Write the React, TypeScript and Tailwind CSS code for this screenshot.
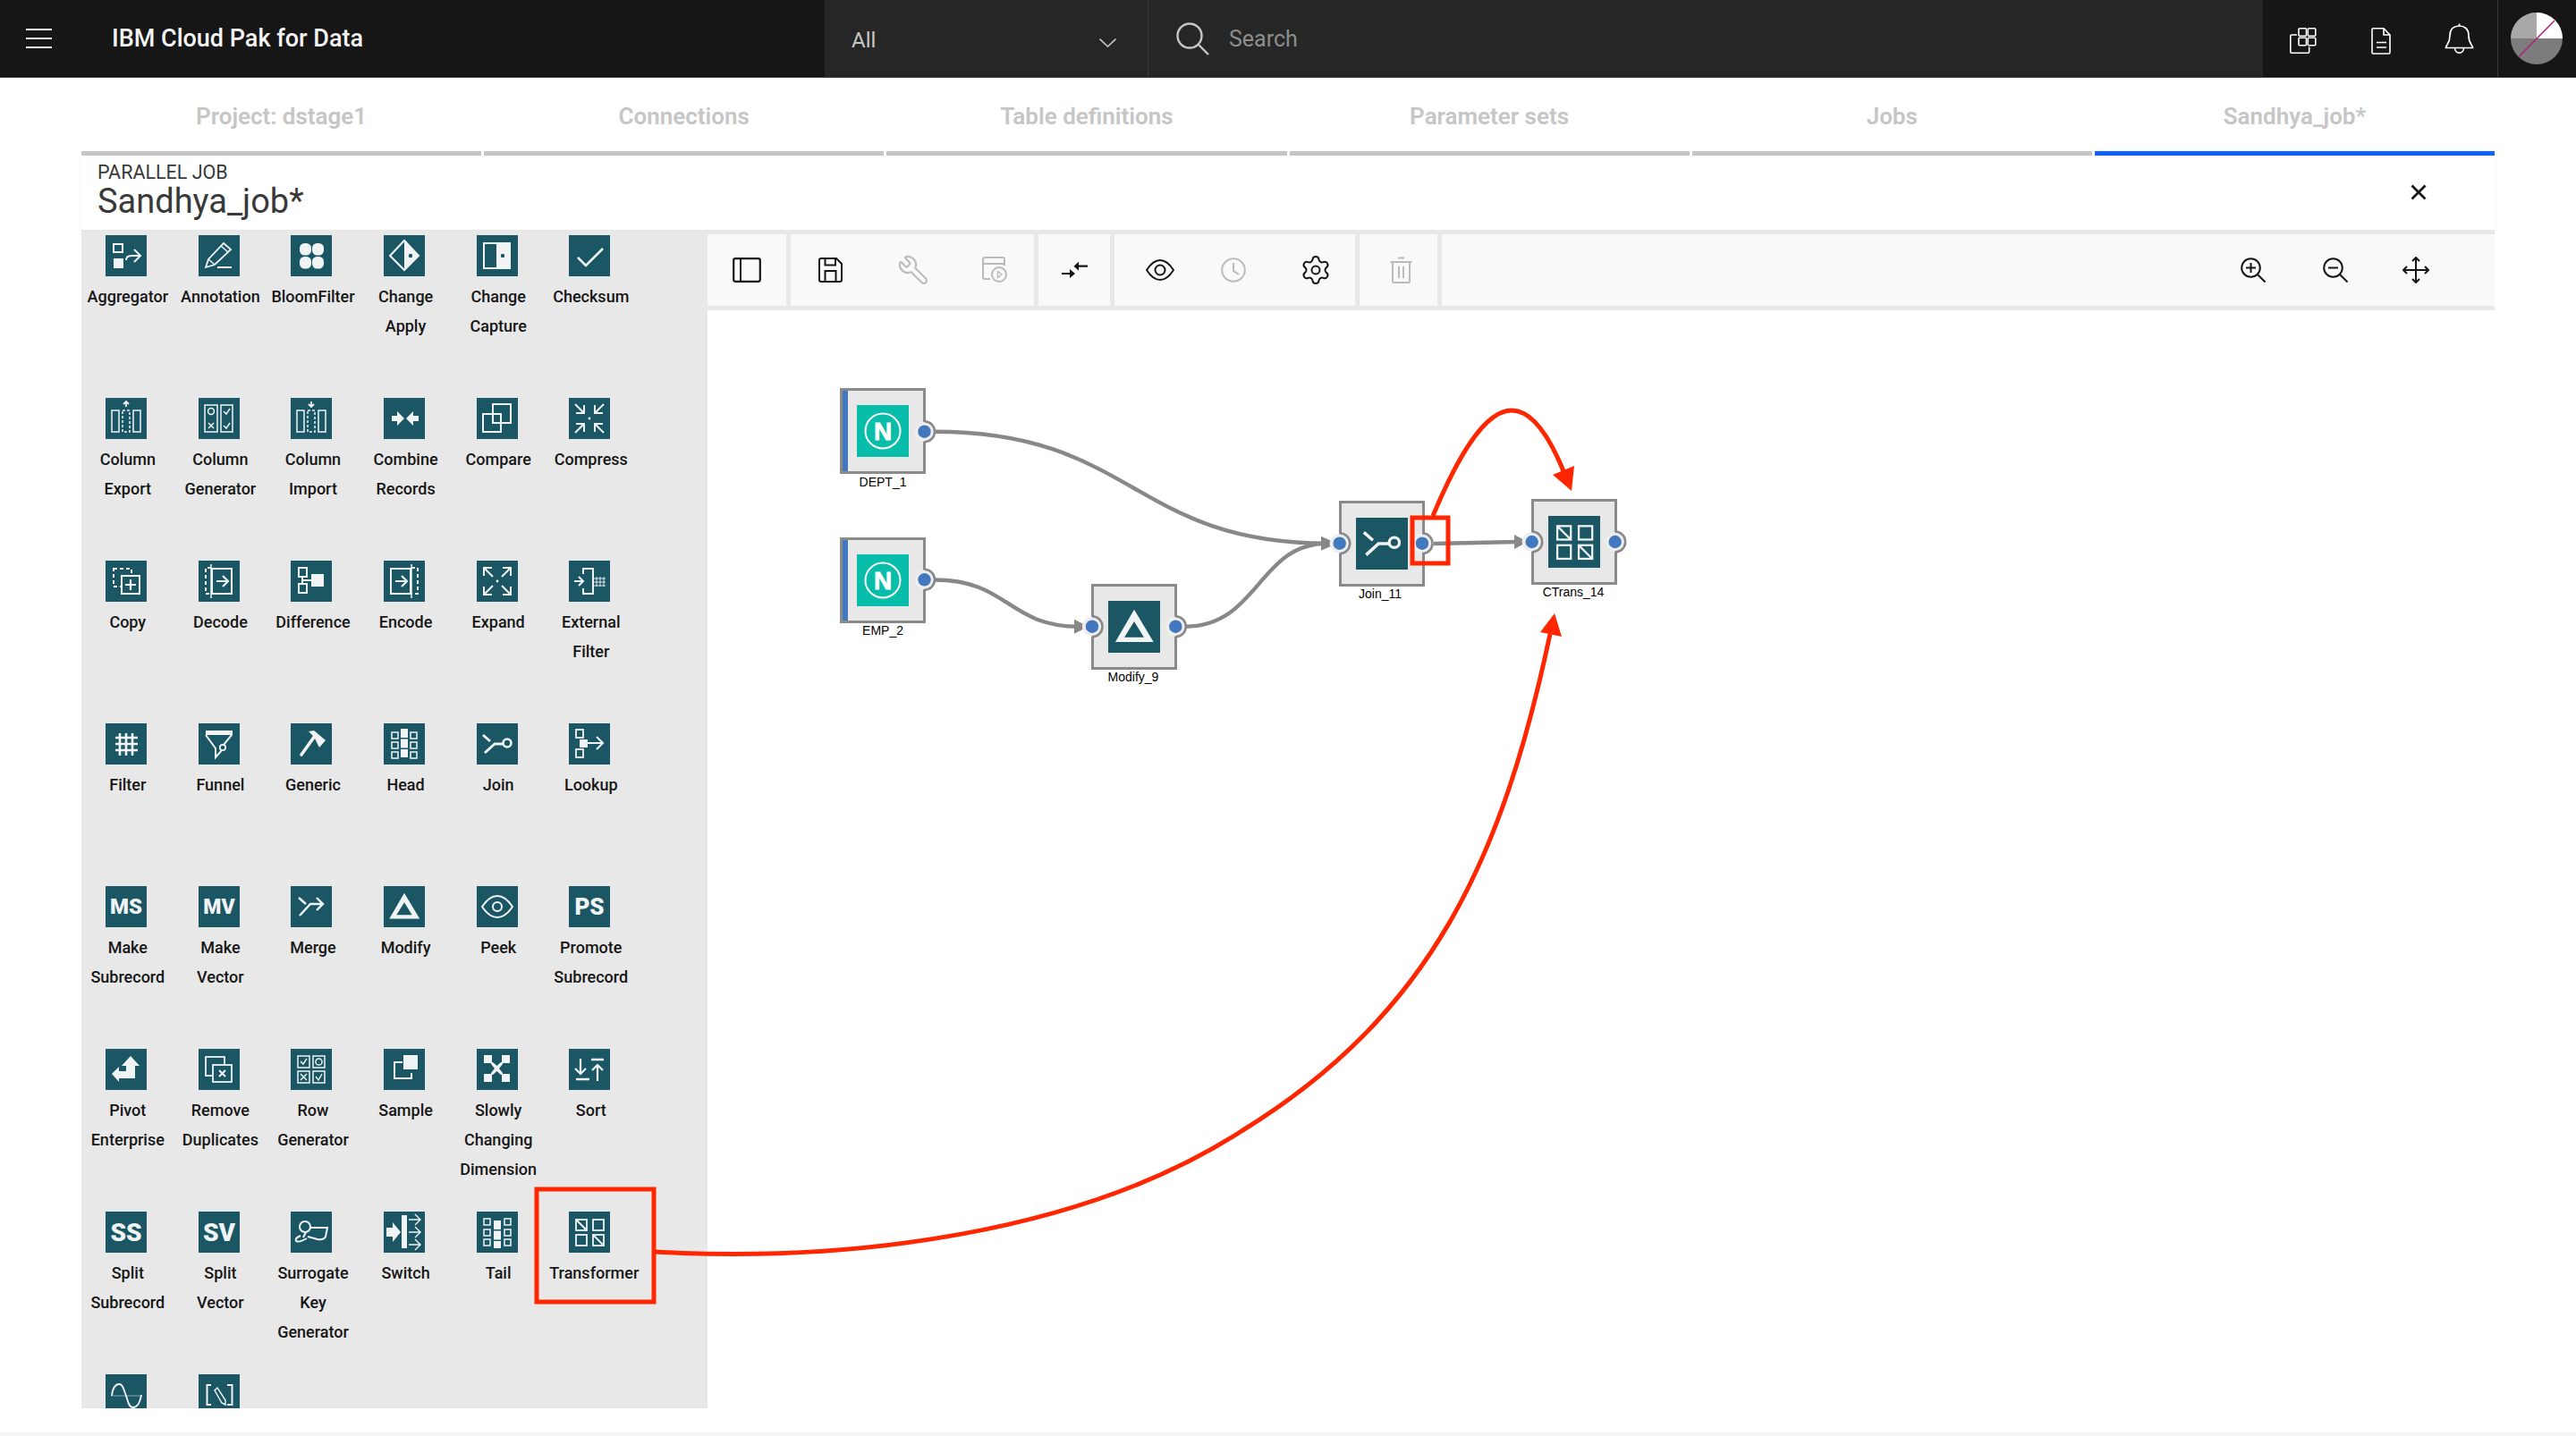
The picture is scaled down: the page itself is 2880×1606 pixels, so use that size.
import React from "react";
import { Settings, Wrench } from "lucide-react";

const W = "#f1f4f5";
const F = { fill: W, stroke: "none" } as const;

const Letters = ({ t, s, y }: { t: string; s: number; y: number }) => (
  <text x="23" y={y} textAnchor="middle" fontFamily="Roboto, sans-serif" fontWeight={900} fontSize={s} fill={W} stroke="none">{t}</text>
);

const corners = (out: boolean) => {
  const a = out
    ? ["M18 18 L8 8", "M8 17 V8 H17", "M28 18 L38 8", "M29 8 H38 V17", "M18 28 L8 38", "M8 29 V38 H17", "M28 28 L38 38", "M29 38 H38 V29"]
    : ["M7 7 L17 17", "M8 17 H17 V8", "M39 7 L29 17", "M38 17 H29 V8", "M7 39 L17 29", "M8 29 H17 V38", "M39 39 L29 29", "M38 29 H29 V38"];
  return (
    <>
      {a.map((d) => <path key={d} d={d} strokeWidth={2} />)}
      <circle cx="23" cy="23" r="1.4" {...F} />
    </>
  );
};

const columns = (
  <>
    <rect x="7" y="14" width="8" height="24" />
    <rect x="19" y="14" width="8" height="24" strokeDasharray="3 2" />
    <rect x="31" y="14" width="8" height="24" />
  </>
);

const ICONS: Record<string, React.ReactNode> = {
  Aggregator: (
    <>
      <rect x="9" y="10" width="10" height="9" strokeWidth={2} />
      <rect x="9" y="26" width="11" height="11" {...F} />
      <path d="M23 28 Q23 23 29 23 H38" strokeWidth={2} />
      <path d="M32 16 L39 23 L32 30" strokeWidth={2} />
    </>
  ),
  Annotation: (
    <>
      <path d="M8 36 L11 27 L28 9 L36 16 L18 33 Z" strokeWidth={1.8} />
      <path d="M25 12 L33 19 M11 27 L18 33" />
      <path d="M21 36 H37" strokeWidth={2} />
    </>
  ),
  BloomFilter: (
    <>
      <rect x="10" y="9" width="13" height="13.5" rx="5.5" {...F} />
      <rect x="24" y="9" width="13" height="13.5" rx="5.5" {...F} />
      <rect x="10" y="24" width="13" height="13.5" rx="5.5" {...F} />
      <rect x="24" y="24" width="13" height="13.5" rx="5.5" {...F} />
    </>
  ),
  Change_Apply: (
    <>
      <path d="M23 6 L39 23 L23 39 L7 23 Z" strokeWidth={2} />
      <path d="M23 6 L39 23 L23 39 Z" {...F} />
      <circle cx="30" cy="23" r="2.2" fill="#1b5665" stroke="none" />
    </>
  ),
  Change_Capture: (
    <>
      <rect x="8" y="9" width="29" height="28" strokeWidth={2} />
      <rect x="22" y="9" width="15" height="28" {...F} />
      <circle cx="29" cy="23" r="2.2" fill="#1b5665" stroke="none" />
    </>
  ),
  Checksum: <path d="M10 25 L19 34 L38 15" strokeWidth={2.6} />,
  Column_Export: (
    <>
      {columns}
      <path d="M23 10 V4 M20 7 L23 4 L26 7" strokeWidth={1.8} />
    </>
  ),
  Column_Generator: (
    <>
      <rect x="7" y="8" width="14" height="30" />
      <rect x="25" y="8" width="13" height="30" />
      <circle cx="14" cy="15" r="3.4" />
      <path d="M11 28 L17 34 M17 28 L11 34 M28 15 L31 18 L35 12 M28 31 L31 34 L35 28" />
    </>
  ),
  Column_Import: (
    <>
      {columns}
      <path d="M23 4 V10 M20 7 L23 10 L26 7" strokeWidth={1.8} />
    </>
  ),
  Combine_Records: (
    <>
      <path d="M9 20 H15 V15 L23 23 L15 31 V26 H9 Z" {...F} />
      <path d="M39 20 H33 V15 L25 23 L33 31 V26 H39 Z" {...F} />
    </>
  ),
  Compare: (
    <>
      <rect x="18" y="7" width="20" height="21" strokeWidth={2} />
      <rect x="7" y="18" width="20" height="20" strokeWidth={2} />
    </>
  ),
  Compress: corners(false),
  Copy: (
    <>
      <rect x="9" y="9" width="20" height="20" strokeDasharray="4 3" strokeWidth={2} />
      <rect x="18" y="17" width="20" height="20" fill="#1b5665" strokeWidth={2} />
      <path d="M28 21 V33 M22 27 H34" strokeWidth={2.2} />
    </>
  ),
  Decode: (
    <>
      <path d="M14 8 H8 V37 H14" strokeDasharray="4 3" strokeWidth={2} />
      <rect x="15" y="9" width="22" height="28" strokeWidth={2} />
      <path d="M14 4 V42" />
      <path d="M20 23 H32 M27 17 L33 23 L27 29" strokeWidth={2.2} />
    </>
  ),
  Difference: (
    <>
      <rect x="9" y="8" width="9" height="10" strokeWidth={2} />
      <rect x="9" y="26" width="9" height="10" strokeWidth={2} />
      <path d="M13 18 V26 M13 22 H23" strokeWidth={2} />
      <rect x="23" y="15" width="14" height="14" {...F} />
    </>
  ),
  Encode: (
    <>
      <rect x="8" y="9" width="22" height="28" strokeWidth={2} />
      <path d="M31 8 H38 V37 H31" strokeDasharray="4 3" strokeWidth={2} />
      <path d="M31 4 V42" />
      <path d="M13 23 H25 M20 17 L26 23 L20 29" strokeWidth={2.2} />
    </>
  ),
  Expand: corners(true),
  External_Filter: (
    <>
      <path d="M6 23 H15 M11 18 L16 23 L11 28" strokeWidth={2} />
      <path d="M16 15 V9 H27 V37 H16 V31" strokeWidth={2} />
      <path d="M31 18 V29 M35 18 V29 M39 18 V29 M28 20 H41 M28 24 H41 M28 28 H41" strokeWidth={0.9} />
    </>
  ),
  Filter: <path d="M16 11 V36 M23 11 V36 M30 11 V36 M11 16 H36 M11 23 H36 M11 30 H36" strokeWidth={2.6} />,
  Funnel: (
    <>
      <path d="M8 9 H37 V13 L28 24 M8 13 L19 28 V38 L26 30" strokeWidth={2} />
      <path d="M8 9 H37 V13 H8 Z" {...F} />
      <circle cx="27" cy="27" r="3.2" strokeWidth={1.8} />
    </>
  ),
  Generic: (
    <>
      <path d="M12 35 L27 14" strokeWidth={3.6} strokeLinecap="round" />
      <path d="M20 9 L26 8 L39 19 L32 27 L26 15 Z" {...F} />
    </>
  ),
  Head: (
    <>
      {[10, 21, 32].map((y) => (
        <React.Fragment key={y}>
          <rect x="9" y={y} width="7" height="7" />
          <rect x="30" y={y} width="7" height="7" />
        </React.Fragment>
      ))}
      <rect x="19" y="6" width="8" height="10" {...F} />
      <rect x="19" y="17.5" width="8" height="10" {...F} />
      <rect x="19" y="29" width="8" height="9" {...F} />
    </>
  ),
  Join: (
    <>
      <path d="M7 13 L15 20" strokeWidth={2.8} />
      <path d="M9 33 L20 23 H29" strokeWidth={2.8} />
      <circle cx="34" cy="22" r="4.5" strokeWidth={2.6} />
    </>
  ),
  Lookup: (
    <>
      <rect x="8" y="7" width="8" height="9" strokeWidth={1.8} />
      <rect x="8" y="29" width="8" height="9" strokeWidth={1.8} />
      <rect x="12" y="18" width="9" height="9" {...F} />
      <path d="M21 22 H37 M31 15 L38 22 L31 29" strokeWidth={2} />
    </>
  ),
  Make_Subrecord: <Letters t="MS" s={24} y={31} />,
  Make_Vector: <Letters t="MV" s={23} y={31} />,
  Merge: (
    <>
      <path d="M9 13 L17 20" strokeWidth={2.4} />
      <path d="M10 33 L22 20 H36 M29 13 L36 20 L29 27" strokeWidth={2.4} />
    </>
  ),
  Modify: <path fillRule="evenodd" d="M23 7.7 L40.2 36.5 H6.3 Z M23 18.2 L14.3 32.3 H31.7 Z" {...F} />,
  Peek: (
    <>
      <path d="M6 23 Q14 11 23 11 Q32 11 40 23 Q32 35 23 35 Q14 35 6 23 Z" strokeWidth={2} />
      <circle cx="23" cy="23" r="5" strokeWidth={2} />
    </>
  ),
  Promote_Subrecord: <Letters t="PS" s={26} y={32} />,
  Pivot_Enterprise: (
    <path d="M7 28 L15 20 V25 H23 V19 H18 L28 8 L38 19 H33 V33 H15 V37 Z" {...F} />
  ),
  Remove_Duplicates: (
    <>
      <rect x="8" y="9" width="21" height="21" strokeWidth={1.8} />
      <rect x="16" y="18" width="21" height="19" fill="#1b5665" strokeWidth={1.8} />
      <path d="M23 24 L30 31 M30 24 L23 31" strokeWidth={2} />
    </>
  ),
  Row_Generator: (
    <>
      <rect x="8" y="8" width="13" height="13" />
      <rect x="25" y="8" width="13" height="13" />
      <rect x="8" y="25" width="13" height="13" />
      <rect x="25" y="25" width="13" height="13" />
      <circle cx="31.5" cy="14.5" r="3.6" />
      <path d="M11 14 L14 17 L18 11 M11 28 L18 35 M18 28 L11 35 M28 31 L31 35 L35 28" />
    </>
  ),
  Sample: (
    <>
      <path d="M21 15 H12 V33 H31 V27" strokeWidth={2} />
      <rect x="22" y="7" width="16" height="16" {...F} />
    </>
  ),
  Slowly_Changing_Dimension: (
    <>
      <rect x="8" y="7" width="9" height="9" {...F} />
      <rect x="28" y="7" width="9" height="9" {...F} />
      <rect x="8" y="28" width="9" height="9" {...F} />
      <rect x="28" y="28" width="9" height="9" {...F} />
      <path d="M16 15 H18 L22.5 19 L27 15 H29 V17 L25 22 L29 27 V29 H27 L22.5 25 L18 29 H16 V27 L20 22 L16 17 Z" {...F} />
    </>
  ),
  Sort: (
    <>
      <path d="M25 12 H39 M8 34 H23" strokeWidth={2.4} />
      <path d="M13 11 V28 M7 22 L13 28 L19 22" strokeWidth={2.2} />
      <path d="M32 36 V18 M26 24 L32 18 L38 24" strokeWidth={2.2} />
    </>
  ),
  Split_Subrecord: <Letters t="SS" s={28} y={33} />,
  Split_Vector: <Letters t="SV" s={28} y={33} />,
  Surrogate_Key_Generator: (
    <>
      <circle cx="16" cy="17" r="6" strokeWidth={2} />
      <path d="M17 23 L14 29 M21 18 H41 L39 28 Q37 32 30 31 L19 28 M11 27 Q4 30 6 33 Q9 35 18 30" strokeWidth={2} />
    </>
  ),
  Switch: (
    <>
      <path d="M3 18 H10 V12 L19 23 L10 34 V28 H3 Z" {...F} />
      <rect x="20" y="4" width="6" height="37" {...F} />
      <path d="M28 9 H41 M35 3 L41 9 L35 15 M28 23 H41 M35 17 L41 23 L35 29 M28 37 H41 M35 31 L41 37 L35 43" strokeWidth={1.4} />
    </>
  ),
  Tail: (
    <>
      {[8, 20, 31].map((y) => (
        <React.Fragment key={y}>
          <rect x="8" y={y} width="7" height="7" />
          <rect x="31" y={y} width="7" height="7" />
        </React.Fragment>
      ))}
      <rect x="19" y="10" width="8" height="10" {...F} />
      <rect x="19" y="21.5" width="8" height="10" {...F} />
      <rect x="19" y="33" width="8" height="8" {...F} />
    </>
  ),
  Transformer: (
    <>
      <rect x="8" y="9" width="12" height="12" strokeWidth={1.8} />
      <rect x="27" y="9" width="12" height="12" strokeWidth={1.8} />
      <rect x="8" y="26" width="12" height="12" strokeWidth={1.8} />
      <rect x="27" y="26" width="12" height="12" strokeWidth={1.8} />
      <path d="M8 9 L20 21 M27 26 L39 38" strokeWidth={1.8} />
    </>
  ),
  Wave: (
    <>
      <path d="M7 24 C8 14 12 11 15.6 11 C20 11 21 20 23 24 C25 30 26 37 30.5 37 C35 37 38 34 40 23" strokeWidth={1.8} />
      <path d="M6 24 H41" strokeWidth={0.5} />
    </>
  ),
  Edit: (
    <>
      <path d="M14 12 H9.5 V34 H14 M32 12 H37.5 V34 H32" strokeWidth={2} />
      <path d="M18 18 L21 15 L30 29 L30 34 L26 32 Z" strokeWidth={1.4} />
    </>
  ),
};

const Tile = ({ name, size = 46, className = "" }: { name: string; size?: number; className?: string }) => (
  <svg viewBox="0 0 46 46" width={size} height={size} className={`block shrink-0 ${className}`}>
    <rect width="46" height="46" fill="#1b5665" />
    <g fill="none" stroke={W} strokeWidth={1.5}>{ICONS[name]}</g>
  </svg>
);

const NTile = () => (
  <svg viewBox="0 0 58 58" width={58} height={58} className="block">
    <rect width="58" height="58" fill="#08bdaa" />
    <circle cx="29" cy="29" r="19.5" fill="none" stroke="#fff" strokeWidth={2} />
    <text x="29" y="39" textAnchor="middle" fontFamily="Liberation Sans, sans-serif" fontWeight={700} fontSize={28} fill="#fff" stroke="#fff" strokeWidth={0.8}>N</text>
  </svg>
);

const ITEMS: string[] = [
  "Aggregator", "Annotation", "BloomFilter", "Change Apply", "Change Capture", "Checksum",
  "Column Export", "Column Generator", "Column Import", "Combine Records", "Compare", "Compress",
  "Copy", "Decode", "Difference", "Encode", "Expand", "External Filter",
  "Filter", "Funnel", "Generic", "Head", "Join", "Lookup",
  "Make Subrecord", "Make Vector", "Merge", "Modify", "Peek", "Promote Subrecord",
  "Pivot Enterprise", "Remove Duplicates", "Row Generator", "Sample", "Slowly Changing Dimension", "Sort",
  "Split Subrecord", "Split Vector", "Surrogate Key Generator", "Switch", "Tail", "Transformer",
];

const TopBar = () => (
  <header className="flex h-[87px] shrink-0 border-b border-[#393939] [font-family:Roboto,sans-serif]">
    <div className="w-[922px] bg-[#161616] flex items-center">
      <svg width="29" height="22" viewBox="0 0 29 22" className="ml-[29px]" stroke="#f4f4f4" strokeWidth={2}>
        <path d="M0 1 H29 M0 11 H29 M0 21 H29" />
      </svg>
      <span className="ml-[67px] text-[27px] font-medium text-[#f4f4f4]">IBM Cloud Pak for Data</span>
    </div>
    <div className="w-[362px] bg-[#262626] border-r border-[#393939] flex items-center pl-[30px] pr-[35px] justify-between">
      <span className="text-[24px] text-[#c6c6c6] mt-[4px]">All</span>
      <svg width="19" height="10" viewBox="0 0 19 10" fill="none" stroke="#c6c6c6" strokeWidth={1.6} className="mt-[9px]">
        <path d="M0.5 0.5 L9.5 9 L18.5 0.5" />
      </svg>
    </div>
    <div className="flex-1 bg-[#262626] flex items-center pl-[31px]">
      <svg width="37" height="37" viewBox="0 0 37 37" fill="none" stroke="#c6c6c6" strokeWidth={2.4}>
        <circle cx="15" cy="15" r="13.5" />
        <path d="M25 25 L36 36" />
      </svg>
      <span className="ml-[22px] text-[25px] text-[#8d8d8d] mt-[2px]">Search</span>
    </div>
    <div className="w-[262px] shrink-0 bg-[#161616] flex items-center pl-[30px]">
      <svg width="30" height="30" viewBox="0 0 30 30" fill="none" stroke="#fff" strokeWidth={1.6} className="mt-[6px]">
        <rect x="10" y="0.8" width="8.5" height="8.4" rx="1" />
        <rect x="20.3" y="0.8" width="8.5" height="8.4" rx="1" />
        <rect x="10" y="11.3" width="8.5" height="8.4" rx="1" />
        <rect x="20.3" y="11.3" width="8.5" height="8.4" rx="1" />
        <path d="M8 8 H2 Q0.8 8 0.8 9.2 V27 Q0.8 28.2 2 28.2 H20.5 Q21.7 28.2 21.7 27 V21.5" />
      </svg>
      <svg width="22" height="30" viewBox="0 0 22 30" fill="none" stroke="#fff" strokeWidth={1.6} className="ml-[61px] mt-[6px]">
        <path d="M2 0.8 H14 L21 8 V27.5 Q21 29 19.5 29 H2.5 Q1 29 1 27.5 V2 Q1 0.8 2 0.8 Z M14 0.8 V8 H21 M6 16.5 H17 M6 22 H17" />
      </svg>
      <svg width="33" height="37" viewBox="0 0 33 37" fill="none" stroke="#fff" strokeWidth={1.7} className="ml-[60px]">
        <path d="M1.5 28.5 C1.5 25 6 24 6 15 C6 7 11 4 16.5 4 C22 4 27 7 27 15 C27 24 31.5 25 31.5 28.5 Z M16.5 4 V1.5 M11.5 28.5 C11.5 36 21.5 36 21.5 28.5" />
      </svg>
    </div>
    <div className="w-[88px] shrink-0 bg-[#161616] border-l border-[#393939] flex items-center pl-[14px]">
      <svg width="58" height="58" viewBox="-29 -29 58 58">
        <circle r="29" fill="#7c7c7c" />
        <path d="M0 0 V-29 A29 29 0 0 0 -29 0 Z" fill="#a8a8a8" />
        <path d="M0 0 V-29 A29 29 0 0 1 29 0 Z" fill="#fff" />
        <path d="M20 -20 L-20 20.5" stroke="#b0227a" strokeWidth={1.6} />
      </svg>
    </div>
  </header>
);

const TABS = ["Project: dstage1", "Connections", "Table definitions", "Parameter sets", "Jobs", "Sandhya_job*"];

const Tabs = () => (
  <nav className="flex gap-[3px] h-[87px] shrink-0 [font-family:Roboto,sans-serif]">
    {TABS.map((t, i) => (
      <div
        key={t}
        className={`flex-1 flex items-center justify-center pt-[4px] border-b-[5px] text-[26px] font-semibold text-[#c6c6c6] ${i === 5 ? "border-[#0f62fe]" : "border-[#c6c6c6]"}`}
      >
        {t}
      </div>
    ))}
  </nav>
);

const Title = () => (
  <div className="mt-[2px] h-[81px] shrink-0 bg-white flex items-center justify-between pl-[18px] pr-[76px] shadow-[0_1px_6px_rgba(0,0,0,0.06)] [font-family:Roboto,sans-serif] text-[#393939]">
    <div className="flex flex-col self-start pt-[4px]">
      <span className="text-[21.5px] leading-[26px]">PARALLEL JOB</span>
      <span className="text-[38px] leading-[38px]">Sandhya_job*</span>
    </div>
    <svg width="18" height="18" viewBox="0 0 18 18" stroke="#161616" strokeWidth={2.8} className="-mt-[3px]">
      <path d="M1.5 1.5 L16.5 16.5 M16.5 1.5 L1.5 16.5" />
    </svg>
  </div>
);

const Palette = () => (
  <aside className="w-[700px] shrink-0 bg-[#e8e8e8] overflow-hidden pt-[6px] [font-family:Roboto,sans-serif]">
    <div className="grid grid-cols-[repeat(6,103.6px)] auto-rows-[182px]">
      {ITEMS.map((it) => (
        <div key={it} className="flex flex-col items-center">
          <Tile name={it.replace(/ /g, "_")} className="mr-[3px]" />
          <div className={`mt-[7px] text-[18px] leading-[32.8px] font-medium text-[#161616] text-center whitespace-nowrap ${it === "Transformer" ? "ml-[7px]" : ""}`}>
            {it.split(" ").map((w) => <div key={w}>{w}</div>)}
          </div>
        </div>
      ))}
      {["Wave", "Edit"].map((n) => (
        <div key={n} className="flex flex-col items-center">
          <Tile name={n} className="mr-[3px]" />
        </div>
      ))}
    </div>
  </aside>
);

const Ic = ({ w, h, c = "#161616", sw = 2, children, className = "" }: { w: number; h: number; c?: string; sw?: number; children: React.ReactNode; className?: string }) => (
  <svg width={w} height={h} viewBox={`0 0 ${w} ${h}`} fill="none" stroke={c} strokeWidth={sw} className={`block shrink-0 ${className}`}>
    {children}
  </svg>
);

const GR = "#bbbbbb";

const Toolbar = () => (
  <div className="flex gap-[5px] h-[90px] py-[5px] bg-[#e8e8e8] shrink-0">
    <div className="w-[88px] bg-[#f9f9f9] flex items-center justify-center">
      <Ic w={32} h={28}>
        <rect x="1.2" y="1.2" width="29.6" height="25.6" rx="2" strokeWidth={2.2} />
        <path d="M9 1 V27" />
      </Ic>
    </div>
    <div className="w-[272px] bg-[#f9f9f9] flex items-center pl-[31px]">
      <Ic w={27} h={28}>
        <path d="M3 1 H20 L26 7 V25 Q26 27 24 27 H3 Q1 27 1 25 V3 Q1 1 3 1 Z" strokeWidth={2} />
        <path d="M7.5 1 V8.5 H19 V1 M7.5 27 V15 H19.5 V27" />
      </Ic>
      <Wrench size={36} strokeWidth={1.4} color={GR} className="ml-[61px] -scale-x-100 shrink-0" />
      <Ic w={28} h={30} c={GR} className="ml-[59px]">
        <path d="M9 25 H3 Q1 25 1 23 V3 Q1 1 3 1 H23 Q25 1 25 3 V10 M1 8 H25" />
        <circle cx="19" cy="20" r="8" />
        <path d="M17.5 16.5 L22 20 L17.5 23.5 Z" strokeWidth={1.4} />
      </Ic>
    </div>
    <div className="w-[80px] bg-[#f9f9f9] flex items-center justify-center">
      <Ic w={29} h={20}>
        <path d="M19 0.7 V10.7 L13.5 5.7 Z M9 9 V19 L15 14 Z" fill="#161616" stroke="none" />
        <path d="M19 5.7 H29 M0 14 H9" strokeWidth={2.2} />
      </Ic>
    </div>
    <div className="w-[269px] bg-[#f9f9f9] flex items-center pl-[35px]">
      <Ic w={32} h={24}>
        <path d="M1 12 Q8 1 16 1 Q24 1 31 12 Q24 23 16 23 Q8 23 1 12 Z" />
        <circle cx="16" cy="12" r="5.5" />
      </Ic>
      <Ic w={28} h={28} c={GR} className="ml-[52px]">
        <circle cx="14" cy="14" r="12.8" />
        <path d="M14 6 V15 L20 19" />
      </Ic>
      <Settings size={36} strokeWidth={1.3} color="#161616" className="ml-[60px] shrink-0" />
    </div>
    <div className="w-[87px] bg-[#f9f9f9] flex items-center justify-center pl-[5px]">
      <Ic w={25} h={30} c={GR}>
        <path d="M0.5 6 H24.5 M9 1.5 H16 M3 6 V27.5 Q3 29 4.5 29 H20.5 Q22 29 22 27.5 V6 M10 11 V24 M15 11 V24" />
      </Ic>
    </div>
    <div className="flex-1 bg-[#f9f9f9] flex items-center justify-end pr-[73px]">
      <Ic w={28} h={28}>
        <circle cx="11.5" cy="11.5" r="10.3" />
        <path d="M19 19 L27.5 27.5 M11.5 6 V17 M6 11.5 H17" />
      </Ic>
      <Ic w={28} h={28} className="ml-[64px]">
        <circle cx="11.5" cy="11.5" r="10.3" />
        <path d="M19 19 L27.5 27.5 M6 11.5 H17" />
      </Ic>
      <Ic w={30} h={30} className="ml-[61px]">
        <path d="M15 1 V29 M1 15 H29" />
        <path d="M11 5 L15 1 L19 5 M11 25 L15 29 L19 25 M5 11 L1 15 L5 19 M25 11 L29 15 L25 19" />
      </Ic>
    </div>
  </div>
);

const NODES = [
  { id: "DEPT_1", x: 939, y: 434, lx: 987, ly: 539, n: true },
  { id: "EMP_2", x: 939, y: 601, lx: 987, ly: 705, n: true },
  { id: "Modify_9", x: 1220, y: 653, lx: 1267, ly: 757, icon: "Modify" },
  { id: "Join_11", x: 1497, y: 560, lx: 1543, ly: 664, icon: "Join" },
  { id: "CTrans_14", x: 1712, y: 558, lx: 1759, ly: 662, icon: "Transformer" },
];

const OX = 791;
const OY = 347;

const Port = ({ x, y }: { x: number; y: number }) => (
  <>
    <circle cx={x} cy={y} r={11} fill="#eeeeee" />
    <path d={`M${x} ${y - 11.5} A11.5 11.5 0 0 1 ${x} ${y + 11.5}`} fill="none" stroke="#888" strokeWidth={2.6} />
    <circle cx={x} cy={y} r={7.2} fill="#4178be" />
  </>
);

const Canvas = () => (
  <div className="relative flex-1 bg-white">
    {NODES.map((n) => (
      <React.Fragment key={n.id}>
        <div
          className="absolute w-[96px] h-[96px] bg-[#e8e8e8] border-[3px] border-[#8a8a8a] flex items-center justify-center"
          style={{ left: n.x - OX, top: n.y - OY }}
        >
          {n.n && <div className="absolute left-0 top-0 bottom-0 w-[6px] bg-[#4178be]" />}
          {n.n ? <NTile /> : <Tile name={n.icon as string} size={58} />}
        </div>
        <span
          className="absolute -translate-x-1/2 -translate-y-1/2 text-[14px] leading-[16px] text-black whitespace-nowrap [font-family:'Liberation_Sans',sans-serif]"
          style={{ left: n.lx - OX, top: n.ly - OY }}
        >
          {n.id}
        </span>
      </React.Fragment>
    ))}
    <svg className="absolute inset-0 w-full h-full overflow-visible pointer-events-none" fill="none">
      <g transform={`translate(${-OX},${-OY})`}>
        <g stroke="#888" strokeWidth={4.4} fill="none">
          <path d="M1045 482.7 C1267 482.7 1267 607.7 1484 607.7" />
          <path d="M1045 648.5 C1127 648.5 1127 700.7 1206 700.7" />
          <path d="M1325 700.7 C1407 700.7 1407 607.7 1484 607.7" />
          <path d="M1603 608 L1696 606" />
        </g>
        <path d="M1201 692.7 L1217 700.7 L1201 708.7 Z" fill="#888" />
        <path d="M1477 599.7 L1495 607.7 L1477 615.7 Z" fill="#888" />
        <path d="M1693 598 L1708 606 L1693 614 Z" fill="#888" />
        <Port x={1033.5} y={482.7} />
        <Port x={1033.5} y={648.3} />
        <Port x={1221} y={700.7} />
        <Port x={1314.3} y={700.7} />
        <Port x={1497.7} y={607.7} />
        <Port x={1590} y={607.7} />
        <Port x={1712.7} y={606} />
        <Port x={1805.7} y={606} />
      </g>
    </svg>
  </div>
);

const Annotations = () => (
  <svg className="absolute inset-0 w-full h-full pointer-events-none" viewBox="0 0 2880 1606" fill="none">
    <g stroke="#ff2600" strokeWidth={5}>
      <rect x="600" y="1330" width="131" height="126" />
      <rect x="1579" y="579" width="40" height="51" />
      <path d="M1602 577 C1630 510 1660 459 1690 459 C1715 459 1735 495 1748 527" />
      <path d="M731 1400 C950 1412 1210 1380 1388 1265 C1600 1135 1680 960 1733 709" />
    </g>
    <path d="M1757 549 L1736 531 L1760 521 Z" fill="#ff2600" />
    <path d="M1738 686 L1722 707 L1746 712 Z" fill="#ff2600" />
  </svg>
);

export default function App() {
  return (
    <div className="relative w-[2880px] h-[1606px] overflow-hidden bg-white flex flex-col">
      <TopBar />
      <main className="mx-[91px] flex-1 flex flex-col min-h-0">
        <Tabs />
        <Title />
        <div className="flex h-[1318px] shrink-0">
          <Palette />
          <div className="flex-1 flex flex-col">
            <Toolbar />
            <Canvas />
          </div>
        </div>
      </main>
      <div className="h-[4px] shrink-0 bg-[#f4f4f4]" />
      <Annotations />
    </div>
  );
}
